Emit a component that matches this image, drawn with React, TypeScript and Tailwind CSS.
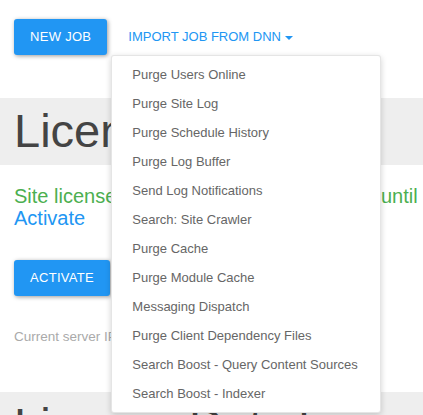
const jobs = [
  'Purge Users Online',
  'Purge Site Log',
  'Purge Schedule History',
  'Purge Log Buffer',
  'Send Log Notifications',
  'Search: Site Crawler',
  'Purge Cache',
  'Purge Module Cache',
  'Messaging Dispatch',
  'Purge Client Dependency Files',
  'Search Boost - Query Content Sources',
  'Search Boost - Indexer',
]

export default function App() {
  return (
    <div className="min-h-[415px] overflow-hidden bg-white font-['Liberation_Sans',Arial,sans-serif] text-[13px] text-[#666]">
      {/* toolbar */}
      <div className="flex items-start pl-[14px] pt-[19px]">
        <button className="h-[36px] rounded-[3px] bg-[#2196f3] px-[16px] text-[13px] leading-[24px] tracking-[0.3px] text-white uppercase shadow-[1px_1px_4px_rgba(0,0,0,0.4)]">
          New Job
        </button>
        <div className="relative ml-[5px]">
          <button className="flex h-[36px] items-center px-[16px] text-[13px] uppercase text-[#2196f3]">
            Import Job from DNN
            <span className="ml-[4px] mt-[1px] h-0 w-0 border-x-[4px] border-t-[4px] border-x-transparent border-t-[#2196f3]" />
          </button>
          <ul className="absolute left-[-1px] top-full z-10 w-[270px] rounded-[3px] border border-black/10 bg-white py-[4px] shadow-[0_2px_6px_rgba(0,0,0,0.18)]">
            {jobs.map((job) => (
              <li key={job} className="whitespace-nowrap px-[20px] py-[3px] leading-[23px] text-[#666]">
                {job}
              </li>
            ))}
          </ul>
        </div>
      </div>

      {/* license panel */}
      <div className="mt-[43px] h-[67px] bg-[#eee] pl-[14px] pt-[7px]">
        <h1 className="text-[47px] leading-[1.1] text-[#444]">License</h1>
      </div>

      <p className="mt-[20px] whitespace-nowrap pl-[14px] text-[20px] leading-[22px] text-[#4caf50]">
        Site license has been activated and valid until
        <br />
        <a className="text-[#2196f3]">Activate</a>
      </p>

      <button className="ml-[14px] mt-[31px] h-[36px] rounded-[3px] bg-[#2196f3] px-[16px] text-[13px] leading-[24px] tracking-[0.3px] text-white uppercase shadow-[1px_1px_4px_rgba(0,0,0,0.4)]">
        Activate
      </button>

      <p className="mt-[29px] pl-[14px] text-[13.5px] leading-[24px] text-[#aaa]">
        Current server IP: 10.0.0.12
      </p>

      <div className="mt-[43px] h-[67px] bg-[#eee] pl-[14px] pt-[7px]">
        <h1 className="text-[47px] leading-[1.1] text-[#444]">License Details</h1>
      </div>
    </div>
  )
}
